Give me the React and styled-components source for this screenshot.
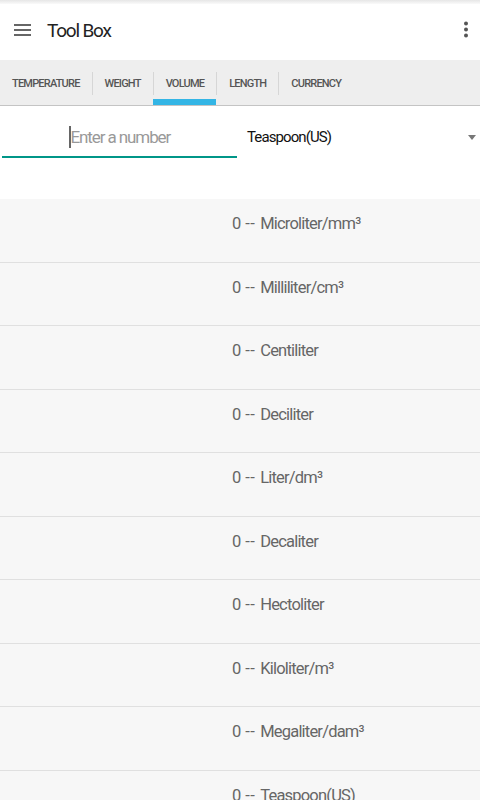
import React from 'react';
import styled, { createGlobalStyle } from 'styled-components';

const units = [
	'Microliter/mm³',
	'Milliliter/cm³',
	'Centiliter',
	'Deciliter',
	'Liter/dm³',
	'Decaliter',
	'Hectoliter',
	'Kiloliter/m³',
	'Megaliter/dam³',
	'Teaspoon(US)',
];

const tabs = ['TEMPERATURE', 'WEIGHT', 'VOLUME', 'LENGTH', 'CURRENCY'];

const GlobalStyle = createGlobalStyle`
	html, body {
		margin: 0;
		padding: 0;
		background: #f7f7f7;
		font-family: Roboto, 'Noto Sans', sans-serif;
		font-variant-ligatures: none;
	}
	* { box-sizing: border-box; }
`;

const App = () => {
	return (
		<Page>
			<GlobalStyle />
			<TopShade />
			<Toolbar>
				<MenuIcon width="18" height="14" viewBox="0 0 18 14">
					<rect x="0" y="0" width="17" height="2" fill="#666" />
					<rect x="0" y="5" width="17" height="2" fill="#666" />
					<rect x="0" y="10" width="17" height="2" fill="#666" />
				</MenuIcon>
				<Title>Tool Box</Title>
				<Overflow width="6" height="18" viewBox="0 0 6 18">
					<circle cx="3" cy="2.5" r="2" fill="#555" />
					<circle cx="3" cy="8.5" r="2" fill="#555" />
					<circle cx="3" cy="14.5" r="2" fill="#555" />
				</Overflow>
			</Toolbar>
			<TabBar>
				{tabs.map((t, i) => (
					<Tab key={t} $active={t === 'VOLUME'} $first={i === 0}>
						{t}
					</Tab>
				))}
			</TabBar>
			<InputArea>
				<NumberField>
					<Caret />
					<Placeholder>Enter a number</Placeholder>
				</NumberField>
				<Spinner>
					<SpinnerText>Teaspoon(US)</SpinnerText>
					<Arrow />
				</Spinner>
			</InputArea>
			<List>
				{units.map((u) => (
					<Row key={u}>
						0<Dashes>{' -- '}</Dashes>
						{u}
					</Row>
				))}
			</List>
		</Page>
	);
};

export default App;

const Page = styled.div`
	width: 480px;
	height: 800px;
	overflow: hidden;
	background: #f7f7f7;
`;

const TopShade = styled.div`
	height: 4px;
	background: linear-gradient(#e6e6e6, #fafafa);
`;

const Toolbar = styled.div`
	height: 56px;
	background: #fff;
	display: flex;
	align-items: center;
	padding: 0 11px 4px 14px;
`;

const MenuIcon = styled.svg`
	margin-top: 1px;
	flex: none;
`;

const Title = styled.div`
	margin-left: 15px;
	font-size: 19px;
	color: #222;
	letter-spacing: -1.2px;
	flex: 1;
`;

const Overflow = styled.svg`
	flex: none;
`;

const TabBar = styled.div`
	height: 46px;
	background: #eeeeee;
	border-bottom: 1px solid #c4c4c4;
	display: flex;
	align-items: stretch;
`;

const Tab = styled.div`
	position: relative;
	display: flex;
	align-items: center;
	padding: 2px 12px 0;
	font-size: 11px;
	font-weight: 500;
	color: #555;
	letter-spacing: -0.8px;
	border-left: ${(p) => (p.$first ? 'none' : '1px solid transparent')};

	&::before {
		content: '';
		display: ${(p) => (p.$first ? 'none' : 'block')};
		position: absolute;
		left: -1px;
		top: 12px;
		bottom: 10px;
		width: 1px;
		background: #d6d6d6;
	}

	&::after {
		content: '';
		display: ${(p) => (p.$active ? 'block' : 'none')};
		position: absolute;
		left: -1px;
		right: 0;
		bottom: 0;
		height: 6px;
		background: #33b5e5;
	}
`;

const InputArea = styled.div`
	height: 93px;
	background: #fff;
	display: flex;
	align-items: flex-start;
	padding: 17px 0 0 2px;
`;

const NumberField = styled.div`
	width: 235px;
	height: 35px;
	border-bottom: 2px solid #009688;
	display: flex;
	align-items: flex-start;
	padding-left: 67px;
	padding-top: 3px;
`;

const Caret = styled.div`
	width: 1.5px;
	height: 22px;
	background: #666;
`;

const Placeholder = styled.span`
	font-size: 17px;
	color: #999;
	letter-spacing: -1.1px;
	line-height: 22px;
`;

const Spinner = styled.div`
	flex: 1;
	display: flex;
	align-items: center;
	padding: 5px 4px 0 10px;
`;

const SpinnerText = styled.span`
	flex: 1;
	font-size: 15px;
	color: #111;
	letter-spacing: -0.9px;
`;

const Arrow = styled.div`
	width: 0;
	height: 0;
	border-left: 4px solid transparent;
	border-right: 4px solid transparent;
	border-top: 5px solid #777;
`;

const List = styled.div`
	background: #f7f7f7;
`;

const Row = styled.div`
	height: 63.5px;
	border-bottom: 1px solid #e0e0e0;
	padding: 15px 0 0 232px;
	font-size: 16.5px;
	color: #666;
	letter-spacing: -0.8px;
	white-space: pre;
`;

const Dashes = styled.span`
	letter-spacing: 0.6px;
`;
